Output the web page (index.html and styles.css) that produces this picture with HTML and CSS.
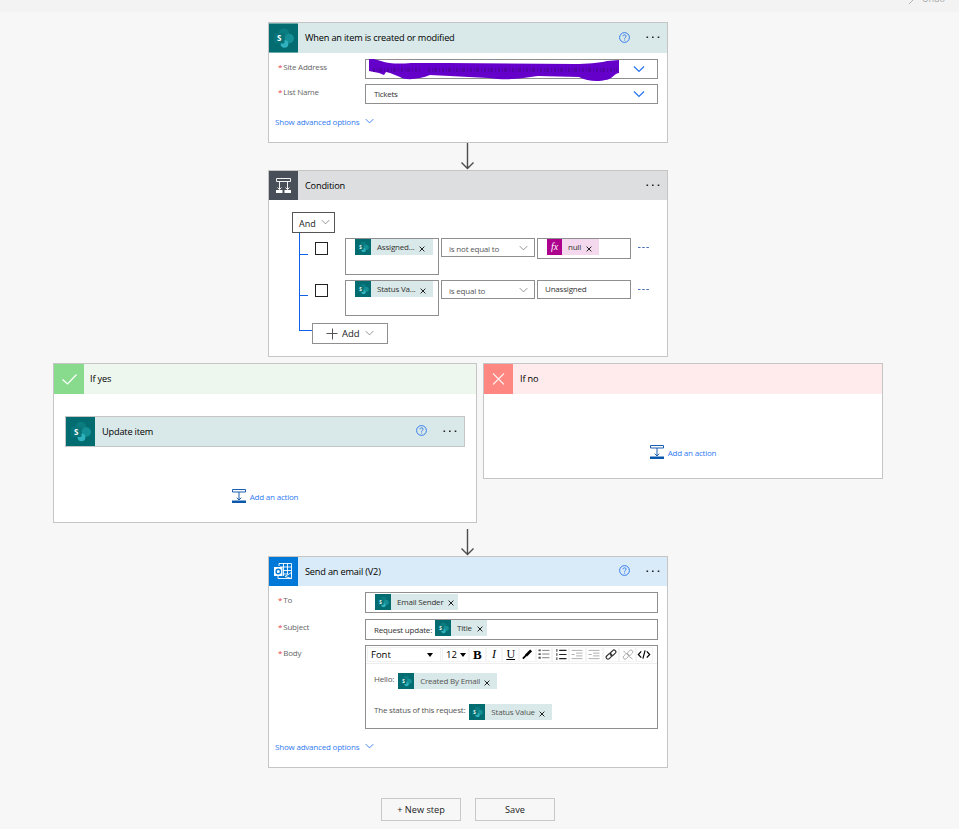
FILE: index.html
```html
<!DOCTYPE html>
<html lang="en">
<head>
    <meta charset="UTF-8">
    <meta name="viewport" content="width=device-width, initial-scale=1.0">
    <title>Edit flow</title>
    <link rel="stylesheet" href="styles.css">
</head>
<body>
    <!-- shared icons -->
    <svg class="sprite" width="0" height="0">
        <symbol id="sharepoint" viewBox="0 0 29 29">
            <rect width="29" height="29" fill="#036c70"/>
            <circle cx="15" cy="10" r="5.2" fill="#0b7c80"/>
            <circle cx="20.3" cy="15" r="4.7" fill="#148f95"/>
            <circle cx="15.5" cy="20.3" r="3.9" fill="#2fb2bd"/>
            <rect x="5" y="9.5" width="10.5" height="10.5" rx="1" fill="#067478"/>
            <text x="10" y="17.6" text-anchor="middle" class="sp-letter">S</text>
        </symbol>
        <symbol id="chevron" viewBox="0 0 12 8">
            <path d="M1 1.5 6 6.5 11 1.5" fill="none" stroke="currentColor" stroke-width="1.2"/>
        </symbol>
        <symbol id="help" viewBox="0 0 11 11">
            <circle cx="5.5" cy="5.5" r="4.9" fill="none" stroke="currentColor" stroke-width=".9"/>
            <path d="M4 4.3C4 2.3 7.1 2.4 7.1 4.2 7.1 5.4 5.6 5.3 5.6 6.7M5.6 7.6v1" fill="none" stroke="currentColor" stroke-width=".9"/>
        </symbol>
        <symbol id="close" viewBox="0 0 6 6">
            <path d="M.6 .6 5.4 5.4M5.4 .6 .6 5.4" fill="none" stroke="currentColor"/>
        </symbol>
        <symbol id="dots" viewBox="0 0 14 3">
            <path d="M.5 .5h1.600v1.600H.5zM6 .5h1.600v1.600H6zM11.700 .5h1.600v1.600h-1.600z" fill="currentColor"/>
        </symbol>
        <symbol id="row-dots" viewBox="0 0 11 2">
            <path d="M0 .5h2.500M4.200 .5h2.500M8.400 .5h2.500" stroke="currentColor"/>
        </symbol>
        <symbol id="insert" viewBox="0 0 14 14">
            <path d="M.5 3V.5h13V3z" fill="#fff" stroke="#1a5fb0"/>
            <path d="M7 3v8M4.8 8.7 7 11l2.2-2.3" fill="none" stroke="#1a5fb0"/>
            <rect y="11.5" width="14" height="2.5" fill="#0a58ab"/>
        </symbol>
        <symbol id="arrow" viewBox="0 0 14 27">
            <path d="M6.500 0v26M.5 19.500l6 6 6-6" fill="none" stroke="#4d4d4d" stroke-width="1.400"/>
        </symbol>
    </svg>

    <div class="topbar">
        <svg class="undo-icon" width="6" height="8" viewBox="0 0 6 8"><path d="M0 7 5 2" stroke="#b9b4b4" fill="none"/></svg>
        <span>Undo</span>
    </div>

    <main class="flow">
        <section class="card trigger">
            <header class="card-head teal">
                <svg class="card-icon"><use href="#sharepoint"/></svg>
                <h2>When an item is created or modified</h2>
                <svg class="help"><use href="#help"/></svg>
                <svg class="dots"><use href="#dots"/></svg>
            </header>
            <div class="fields">
                <div class="field">
                    <label><i>*</i>Site Address</label>
                    <div class="input select">
                        <svg class="scribble" width="252" height="23" viewBox="0 0 252 23">
                            <path d="M1 0C5-1 9 1 13 2 21 5 32 5 43 4L80 4 207 5C218 5 232 4 239 2L251 1V14C245 15 244 21 237 21 230 23 218 22 211 18L170 17C154 19 143 22 120 19L82 17 62 16C52 20 38 22 32 18L22 14 18 13 16 16 11 14 6 13 1 12Z" fill="#6500cb"/>
                            <path d="M5 11h47M60 11h189" stroke="#47068f" stroke-width="4" stroke-dasharray="2 2 1 1 3 2 1 2" opacity=".55"/>
                        </svg>
                        <svg class="chev"><use href="#chevron"/></svg>
                    </div>
                </div>
                <div class="field">
                    <label><i>*</i>List Name</label>
                    <div class="input select">
                        <span>Tickets</span>
                        <svg class="chev"><use href="#chevron"/></svg>
                    </div>
                </div>
            </div>
            <a class="advanced">Show advanced options <svg><use href="#chevron"/></svg></a>
        </section>

        <svg class="connector"><use href="#arrow"/></svg>

        <section class="card condition">
            <header class="card-head grey">
                <svg class="card-icon" viewBox="0 0 29 29">
                    <rect width="29" height="29" fill="#484f58"/>
                    <path d="M7.500 7.500h14v3h-14zM10.500 10.500v8M18.500 10.500v8M8.500 16.500l2 2 2-2M16.500 16.500l2 2 2-2" fill="none" stroke="#f2f2f2"/>
                    <path d="M7 19h6.500v3H7zM15.500 19h6.500v3h-6.500z" fill="#fff"/>
                </svg>
                <h2>Condition</h2>
                <svg class="dots"><use href="#dots"/></svg>
            </header>
            <div class="tree">
                <button class="and-btn">And <svg><use href="#chevron"/></svg></button>
                <div class="rules">
                    <div class="rule">
                        <span class="tick"></span>
                        <span class="check"></span>
                        <div class="operand">
                            <span class="token"><svg class="token-icon"><use href="#sharepoint"/></svg><b>Assigned...</b><svg class="x"><use href="#close"/></svg></span>
                        </div>
                        <div class="operator">is not equal to <svg><use href="#chevron"/></svg></div>
                        <div class="value tall">
                            <span class="token pink"><em class="fx">fx</em><b>null</b><svg class="x"><use href="#close"/></svg></span>
                        </div>
                        <svg class="row-dots"><use href="#row-dots"/></svg>
                    </div>
                    <div class="rule second">
                        <span class="tick"></span>
                        <span class="check"></span>
                        <div class="operand">
                            <span class="token"><svg class="token-icon"><use href="#sharepoint"/></svg><b>Status Va...</b><svg class="x"><use href="#close"/></svg></span>
                        </div>
                        <div class="operator">is equal to <svg><use href="#chevron"/></svg></div>
                        <div class="value"><span>Unassigned</span></div>
                        <svg class="row-dots"><use href="#row-dots"/></svg>
                    </div>
                </div>
                <div class="add-row">
                    <span class="elbow"></span>
                    <button class="add-btn">
                        <svg class="plus" viewBox="0 0 12 12"><path d="M6.500 .5v11M.5 5.500h11" stroke="#555" fill="none"/></svg>
                        Add
                        <svg class="add-chev"><use href="#chevron"/></svg>
                    </button>
                </div>
            </div>
        </section>

        <div class="branches">
            <section class="card branch yes">
                <header class="card-head green">
                    <svg class="card-icon" viewBox="0 0 30 30"><rect width="30" height="30" fill="#88da8d"/><path d="M8.500 15.500l5 4.500L22.500 10.500" fill="none" stroke="#fff" stroke-width="1.200"/></svg>
                    <h2>If yes</h2>
                </header>
                <div class="card nested">
                    <header class="card-head teal">
                        <svg class="card-icon"><use href="#sharepoint"/></svg>
                        <h2>Update item</h2>
                        <svg class="help"><use href="#help"/></svg>
                        <svg class="dots"><use href="#dots"/></svg>
                    </header>
                </div>
                <a class="add-action"><svg><use href="#insert"/></svg>Add an action</a>
            </section>
            <section class="card branch no">
                <header class="card-head red">
                    <svg class="card-icon" viewBox="0 0 29 30"><rect width="29" height="30" fill="#ff8781"/><path d="M9 9.500l11 11M20 9.500l-11 11" fill="none" stroke="#ffefee" stroke-width="1.100"/></svg>
                    <h2>If no</h2>
                </header>
                <a class="add-action"><svg><use href="#insert"/></svg>Add an action</a>
            </section>
        </div>

        <svg class="connector after-branches"><use href="#arrow"/></svg>

        <section class="card email">
            <header class="card-head blue">
                <svg class="card-icon" viewBox="0 0 29 29">
                    <rect width="29" height="29" fill="#0078d7"/>
                    <path d="M10 9V6.500h12.500V19M14.500 6.500V19M18.500 6.500V17M11 10h11.500M14 13.500h8.500M14 17h5" fill="none" stroke="#fff" stroke-width=".9"/>
                    <path d="M9 19v2.500h13.500V15.500L16 19.500l6.500 2" fill="none" stroke="#fff" stroke-width=".9"/>
                    <rect x="5" y="10" width="8.500" height="9" fill="#fff"/>
                    <circle cx="9.300" cy="14.500" r="2.200" fill="none" stroke="#0078d7" stroke-width="1.400"/>
                </svg>
                <h2>Send an email (V2)</h2>
                <svg class="help"><use href="#help"/></svg>
                <svg class="dots"><use href="#dots"/></svg>
            </header>
            <div class="fields">
                <div class="field">
                    <label><i>*</i>To</label>
                    <div class="input to">
                        <span class="token"><svg class="token-icon"><use href="#sharepoint"/></svg><b>Email Sender</b><svg class="x"><use href="#close"/></svg></span>
                    </div>
                </div>
                <div class="field">
                    <label><i>*</i>Subject</label>
                    <div class="input subject">
                        <span>Request update:</span>
                        <span class="token"><svg class="token-icon"><use href="#sharepoint"/></svg><b>Title</b><svg class="x"><use href="#close"/></svg></span>
                    </div>
                </div>
                <div class="field">
                    <label><i>*</i>Body</label>
                    <div class="editor">
                        <div class="toolbar">
                            <span class="font">Font <i class="caret"></i></span>
                            <span class="size">12 <i class="caret"></i></span>
                            <span class="tool bold">B</span>
                            <span class="tool italic">I</span>
                            <span class="tool underline">U</span>
                            <span class="tool"><svg viewBox="0 0 12 12"><path d="M10.500 1.500 5 7" stroke="#000" stroke-width="3"/><path d="M5.500 6.500 1.500 10.500" stroke="#000" stroke-width="2"/></svg></span>
                            <span class="tool"><svg viewBox="0 0 12 12"><path d="M0 1.500h2.500M0 5.500h2.500M0 9.500h2.500" stroke="#555" stroke-width="2"/><path d="M4 1.500H12M4 5.500H12M4 9.500H12" stroke="#777"/></svg></span>
                            <span class="tool"><svg viewBox="0 0 12 12"><path d="M1.500 0v3M1.500 4.500v3M1.500 9v3" stroke="#222"/><path d="M4 1.500h8M4 6h8M4 10.500h8" stroke="#222" stroke-width="1.200"/></svg></span>
                            <span class="tool"><svg viewBox="0 0 12 12"><path d="M0 1.500h12M5 4.500h7M5 7.500h7M0 10.500h12M0 6h3.500" stroke="#aaa"/></svg></span>
                            <span class="tool"><svg viewBox="0 0 12 12"><path d="M0 1.500h12M5 4.500h7M5 7.500h7M0 10.500h12M0 6h3.500" stroke="#aaa"/></svg></span>
                            <span class="tool"><svg viewBox="0 0 12 12"><g fill="none" stroke="#333" stroke-width="1.300"><rect x="4.700" y="2.200" width="7" height="4" rx="2" transform="rotate(-45 8.200 4.200)"/><rect x=".3" y="6" width="7" height="4" rx="2" transform="rotate(-45 3.800 8)"/></g></svg></span>
                            <span class="tool"><svg viewBox="0 0 12 12"><g fill="none" stroke="#aaa" stroke-width="1"><rect x="4.700" y="2.200" width="7" height="4" rx="2" transform="rotate(-45 8.200 4.200)"/><rect x=".3" y="6" width="7" height="4" rx="2" transform="rotate(-45 3.800 8)"/><path d="M1 2l3 3M7 8l4 3"/></g></svg></span>
                            <span class="tool"><svg class="code" viewBox="0 0 14 12"><path d="M4 2.500.8 6 4 9.500M10 2.500 13.200 6 10 9.500M8.200 1.500l-2.400 9" fill="none" stroke="#000" stroke-width="1.300"/></svg></span>
                        </div>
                        <p class="line">
                            <span>Hello:</span>
                            <span class="token"><svg class="token-icon"><use href="#sharepoint"/></svg><b>Created By Email</b><svg class="x"><use href="#close"/></svg></span>
                        </p>
                        <p class="line status">
                            <span>The status of this request:</span>
                            <span class="token"><svg class="token-icon"><use href="#sharepoint"/></svg><b>Status Value</b><svg class="x"><use href="#close"/></svg></span>
                        </p>
                    </div>
                </div>
            </div>
            <a class="advanced">Show advanced options <svg><use href="#chevron"/></svg></a>
        </section>

        <div class="actions">
            <button>+ New step</button>
            <button>Save</button>
        </div>
    </main>
</body>
</html>
```
FILE: styles.css
```css
* {
    box-sizing: border-box;
}
body {
    margin: 0;
    height: 829px;
    overflow: hidden;
    background: #f7f7f7;
    font-family: "Open Sans", "Noto Sans", sans-serif;
    font-size: 8px;
    letter-spacing: -.2px;
    color: #333;
}
svg {
    display: block;
    flex: none;
}
h2, p {
    margin: 0;
}
i, em {
    font-style: normal;
}
b {
    font-weight: normal;
}
button {
    font-family: inherit;
    color: #222;
    background: transparent;
    padding: 0;
    display: flex;
    align-items: center;
}
.sprite {
    display: none;
}
.sp-letter {
    font: bold 8px "Open Sans", sans-serif;
    fill: #fff;
}

/* top bar, mostly scrolled away */
.topbar {
    height: 12px;
    background: #f3f3f3;
    display: flex;
    justify-content: flex-end;
    padding-right: 14px;
    overflow: hidden;
    color: #a6a6a6;
    font-size: 9px;
    letter-spacing: 0;
    line-height: 12px;
}
.topbar span {
    margin: -7px 0 0 7px;
}
.undo-icon {
    margin-top: -3px;
}

.flow {
    width: 936px;
    padding-top: 10px;
    display: flex;
    flex-direction: column;
    align-items: center;
}
.card {
    width: 400px;
    background: #fff;
    border: 1px solid #c5c5c5;
}
.trigger {
    height: 121px;
}
.condition {
    height: 187px;
}
.email {
    height: 212px;
}
.card-head {
    height: 29px;
    display: flex;
    align-items: center;
    padding-right: 7px;
}
.trigger .card-head, .branch > .card-head {
    height: 30px;
}
.card-icon {
    width: 29px;
    height: 100%;
}
.card-head h2 {
    flex: 1;
    margin-left: 7px;
    font-size: 9.2px;
    letter-spacing: -.18px;
    font-weight: normal;
    color: #000;
    white-space: nowrap;
}
.trigger h2, .branch > .card-head h2 {
    padding-bottom: 1px;
}
.teal { background: #d9e8e8; }
.grey { background: #dddee0; }
.green { background: #edf7ee; }
.red { background: #ffebeb; }
.blue { background: #d9eaf9; }
.help {
    width: 11px;
    height: 11px;
    color: #2672ec;
    margin: 0 16px 2px 0;
}
.dots {
    width: 14px;
    height: 3px;
    color: #222;
    margin-bottom: 1px;
}

.fields {
    padding: 6px 9px 0;
    display: flex;
    flex-direction: column;
    gap: 5px;
}
.field {
    display: flex;
}
.field label {
    width: 87px;
    padding-top: 2px;
    color: #666;
    line-height: 12px;
}
.field label i {
    color: #e83a45;
    margin-right: 1px;
}
.input {
    flex: 1;
    height: 20px;
    border: 1px solid #8f8f8f;
    display: flex;
    align-items: center;
    padding-left: 8px;
    position: relative;
}
.input.select {
    justify-content: space-between;
    padding-right: 12px;
}
.select span {
    padding-bottom: 1px;
    letter-spacing: -.3px;
}
.chev {
    width: 12px;
    height: 8px;
    color: #2672ec;
    margin-left: auto;
}
.scribble {
    position: absolute;
    left: 2px;
    top: -1px;
}
.advanced {
    display: flex;
    align-items: center;
    gap: 6px;
    margin: 11px 0 0 6px;
    height: 12px;
    color: #2f7bf0;
}
.advanced svg {
    width: 9px;
    height: 6px;
}
.connector {
    width: 14px;
    height: 27px;
}
.after-branches {
    margin-top: 6px;
}

.tree {
    padding: 12px 0 0 23px;
}
.and-btn {
    width: 43px;
    height: 21px;
    border: 1px solid #555;
    padding: 1px 0 0 6px;
    font-size: 9px;
    gap: 5px;
}
.and-btn svg {
    width: 9px;
    height: 6px;
    margin-bottom: 3px;
    color: #888;
}
.rules {
    margin-left: 7px;
    border-left: 1px solid #0f62e8;
    height: 90px;
    padding-top: 5px;
}
.rule {
    display: flex;
    align-items: flex-start;
    height: 42px;
}
.tick {
    width: 8px;
    border-top: 1px solid #0f62e8;
    margin-top: 16px;
}
.second .tick {
    margin-top: 15px;
}
.check {
    width: 13px;
    height: 13px;
    border: 1px solid #222;
    margin: 4px 17px 0 7px;
}
.operand, .operator, .value {
    width: 94px;
    height: 37px;
    border: 1px solid #8f8f8f;
    margin-right: 2px;
    padding-left: 9px;
}
.second .operand {
    height: 36px;
}
.operator {
    height: 19px;
    display: flex;
    align-items: center;
    justify-content: space-between;
    padding: 1px 6px 0 7px;
    color: #555;
}
.operator svg {
    width: 9px;
    height: 6px;
    color: #888;
}
.value {
    height: 19px;
    padding-left: 7px;
    line-height: 16px;
}
.value.tall {
    height: 21px;
    padding-left: 9px;
}
.row-dots {
    width: 11px;
    height: 2px;
    color: #4a6fc0;
    margin: 9px 0 0 5px;
}
.token {
    display: flex;
    align-items: center;
    height: 16px;
    background: #d9e8e8;
    padding-right: 4px;
    line-height: 16px;
    white-space: nowrap;
}
.token b {
    flex: 1;
    margin: 0 5px 0 6px;
}
.token-icon {
    width: 16px;
    height: 16px;
}
.x {
    width: 6px;
    height: 6px;
    color: #222;
    margin-top: 1px;
}
.operand .token {
    width: 78px;
    padding-right: 8px;
}
.operand .x {
    margin-top: 3px;
}
.token.pink {
    background: #f4d9ee;
    width: 52px;
    padding-right: 7px;
}
.pink .x {
    margin-top: 3px;
}
.fx {
    width: 16px;
    height: 16px;
    background: #ad008c;
    color: #fff;
    font: italic 10px/15px "Liberation Serif", serif;
    text-align: center;
}
.add-row {
    display: flex;
    margin-left: 7px;
}
.elbow {
    width: 13px;
    height: 8px;
    border-left: 1px solid #0f62e8;
    border-bottom: 1px solid #0f62e8;
}
.add-btn {
    width: 76px;
    height: 21px;
    border: 1px solid #8f8f8f;
    font-size: 9.5px;
    padding-left: 13px;
}
.plus {
    width: 12px;
    height: 12px;
    margin-right: 4px;
}
.add-chev {
    width: 9px;
    height: 6px;
    color: #888;
    margin: 0 0 1px 5px;
}

.branches {
    display: flex;
    align-items: flex-start;
    gap: 6px;
    margin-top: 6px;
}
.yes {
    width: 424px;
    height: 160px;
}
.no {
    height: 116px;
}
.yes > .card-head .card-icon {
    width: 30px;
}
.yes > .card-head h2 {
    margin-left: 6px;
}
.nested {
    margin: 22px 0 0 11px;
}
.add-action {
    display: flex;
    align-items: center;
    justify-content: center;
    gap: 4px;
    height: 14px;
    color: #2f7bf0;
}
.yes .add-action {
    margin-top: 42px;
}
.no .add-action {
    margin-top: 51px;
}
.add-action svg {
    width: 14px;
    height: 14px;
}

.email .fields {
    gap: 6px;
}
.email .input {
    height: 21px;
}
.email .input.to {
    padding: 0 0 1px 9px;
}
.email .input.subject {
    align-items: flex-start;
    gap: 3px;
}
.subject > span:first-child {
    padding-top: 4px;
}
.email .field:last-child {
    margin-top: -1px;
}
.editor {
    flex: 1;
    height: 84px;
    border: 1px solid #8f8f8f;
}
.toolbar {
    display: flex;
    align-items: center;
    height: 18px;
    border-bottom: 1px solid #eee;
    color: #000;
    font-size: 9.5px;
    letter-spacing: 0;
    padding-left: 1px;
}
.font, .size {
    display: flex;
    align-items: center;
    justify-content: space-between;
    height: 15px;
    border: 1px solid #f1f1f1;
    width: 74px;
    padding: 0 7px 0 3px;
}
.size {
    width: 27px;
    padding: 0 2px 0 3px;
    margin-left: 1px;
}
.caret {
    border: 3px solid transparent;
    border-top: 4px solid #000;
    border-bottom: 0;
}
.tool {
    width: 16.7px;
    height: 15px;
    display: flex;
    align-items: center;
    justify-content: center;
    border: 1px solid #f4f4f4;
    font-family: "Liberation Serif", serif;
    font-size: 12px;
}
.tool svg {
    width: 12px;
    height: 11px;
}
.tool .code {
    width: 14px;
    height: 11px;
}
.bold {
    font-weight: bold;
    font-size: 13px;
}
.italic { font-style: italic; }
.underline { text-decoration: underline; }
.line {
    display: flex;
    gap: 4px;
    margin: 9px 0 0 8px;
    color: #555;
}
.line > span:first-child {
    line-height: 12px;
}
.line.status {
    margin-top: 15px;
}
.line .token {
    padding-right: 7px;
}
.line .token b {
    margin-right: 4px;
}
.line .x {
    margin-top: 3px;
}

.actions {
    display: flex;
    gap: 14px;
    margin-top: 30px;
}
.actions button {
    width: 80px;
    height: 23px;
    border: 1px solid #c8c8c8;
    justify-content: center;
    font-size: 9.2px;
}
```
